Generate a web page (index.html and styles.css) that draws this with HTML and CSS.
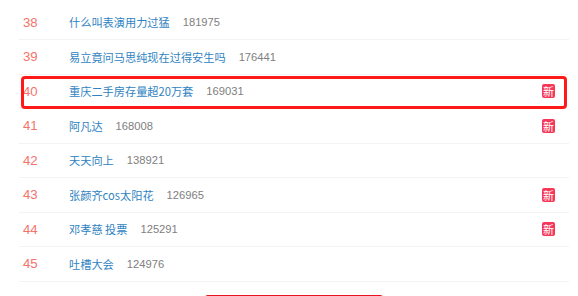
FILE: index.html
```html
<!DOCTYPE html>
<html lang="zh">
<head>
<meta charset="utf-8">
<title>热搜榜</title>
<link rel="stylesheet" href="styles.css">
</head>
<body>
<div class="board">
  <ul class="list">
    <li class="row"><span class="rank">38</span><span class="title">什么叫表演用力过猛</span><span class="count">181975</span></li>
    <li class="row"><span class="rank">39</span><span class="title">易立竟问马思纯现在过得安生吗</span><span class="count">176441</span></li>
    <li class="row highlighted"><span class="rank">40</span><span class="title">重庆二手房存量超20万套</span><span class="count">169031</span><span class="badge">新</span></li>
    <li class="row"><span class="rank">41</span><span class="title">阿凡达</span><span class="count">168008</span><span class="badge">新</span></li>
    <li class="row"><span class="rank">42</span><span class="title">天天向上</span><span class="count">138921</span></li>
    <li class="row"><span class="rank">43</span><span class="title">张颜齐cos太阳花</span><span class="count">126965</span><span class="badge">新</span></li>
    <li class="row"><span class="rank">44</span><span class="title">邓孝慈 投票</span><span class="count">125291</span><span class="badge">新</span></li>
    <li class="row"><span class="rank">45</span><span class="title">吐槽大会</span><span class="count">124976</span></li>
  </ul>
  <div class="more"></div>
</div>
</body>
</html>
```
FILE: styles.css
```css
* { box-sizing: border-box; }
html, body {
  margin: 0;
  padding: 0;
  background: #ffffff;
  overflow: hidden;
}
body {
  width: 578px;
  height: 296px;
  font-family: "Liberation Sans", Arial, "Noto Sans CJK SC", sans-serif;
}
.board {
  padding: 5.5px 9px 0 19px;
}
.list {
  list-style: none;
  margin: 0;
  padding: 0;
}
.row {
  position: relative;
  display: flex;
  align-items: center;
  height: 34.5px;
  border-bottom: 1px solid #f3f3f3;
  padding-left: 4px;
  padding-right: 14px;
}
.rank {
  width: 46px;
  font-size: 13.2px;
  color: #f4736b;
}
.title {
  font-family: "Noto Sans CJK SC", "Liberation Sans", sans-serif;
  font-size: 11.2px;
  color: #2f83c2;
}
.count {
  margin-left: 13px;
  font-size: 11.2px;
  color: #808080;
}
.badge {
  margin-left: auto;
  width: 13px;
  height: 14px;
  border-radius: 2px;
  background: #f7375a;
  color: #ffffff;
  font-family: "Noto Sans CJK SC", sans-serif;
  font-size: 11px;
  line-height: 14px;
  text-align: center;
}
.highlighted::after {
  content: "";
  position: absolute;
  left: 2px;
  right: 2px;
  top: 1.5px;
  bottom: -1px;
  border: 3px solid #ff1a1a;
  border-radius: 4px;
}
.more {
  margin: 13px 0 0 186px;
  width: 178px;
  height: 6px;
  border-top: 2px solid #e5141f;
  border-radius: 3px 3px 0 0;
}
```
